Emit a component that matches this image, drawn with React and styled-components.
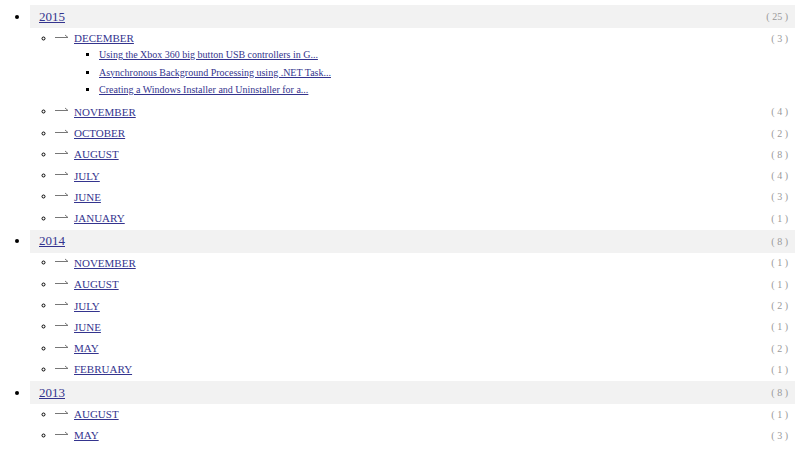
import React from 'react'
import styled, { createGlobalStyle } from 'styled-components'

const archive = [
  {
    year: 2015,
    count: 25,
    months: [
      {
        name: 'December',
        count: 3,
        posts: [
          'Using the Xbox 360 big button USB controllers in G...',
          'Asynchronous Background Processing using .NET Task...',
          'Creating a Windows Installer and Uninstaller for a...'
        ]
      },
      { name: 'November', count: 4 },
      { name: 'October', count: 2 },
      { name: 'August', count: 8 },
      { name: 'July', count: 4 },
      { name: 'June', count: 3 },
      { name: 'January', count: 1 }
    ]
  },
  {
    year: 2014,
    count: 8,
    months: [
      { name: 'November', count: 1 },
      { name: 'August', count: 1 },
      { name: 'July', count: 2 },
      { name: 'June', count: 1 },
      { name: 'May', count: 2 },
      { name: 'February', count: 1 }
    ]
  },
  {
    year: 2013,
    count: 8,
    months: [
      { name: 'August', count: 1 },
      { name: 'May', count: 3 }
    ]
  }
]

const GlobalStyle = createGlobalStyle`
  body {
    margin: 0;
    background: #fff;
    font-family: "Liberation Serif", "Times New Roman", serif;
  }
`

const Arrow = () => (
  <ArrowIcon width="14" height="8" viewBox="0 0 14 8">
    <path d="M0 4.5 H13 M10 2 L13 4.5" fill="none" stroke="#777" strokeWidth="1" />
  </ArrowIcon>
)

export default function App() {
  return (
    <>
      <GlobalStyle />
      <YearList>
        {archive.map((y) => (
          <YearItem key={y.year}>
            {/* year band */}
            <YearRow>
              <YearLink href="#">{y.year}</YearLink>
              <Count>( {y.count} )</Count>
            </YearRow>

            {/* months */}
            <MonthList>
              {y.months.map((m) => (
                <MonthItem key={m.name}>
                  <MonthRow>
                    <Arrow />
                    <MonthLink href="#">{m.name}</MonthLink>
                    <Count>( {m.count} )</Count>
                  </MonthRow>
                  {m.posts && (
                    <PostList>
                      {m.posts.map((p) => (
                        <PostItem key={p}>
                          <PostLink href="#">{p}</PostLink>
                        </PostItem>
                      ))}
                    </PostList>
                  )}
                </MonthItem>
              ))}
            </MonthList>
          </YearItem>
        ))}
      </YearList>
    </>
  )
}

const YearList = styled.ul`
  list-style: disc;
  margin: 5px 5px 0 0;
  padding-left: 30px;
`

const YearItem = styled.li`
  font-size: 13px;
  margin-bottom: 0.4px;
`

const YearRow = styled.div`
  display: flex;
  align-items: center;
  justify-content: space-between;
  height: 23px;
  padding: 0 7px 0 9px;
  background: #f2f2f2;
`

const YearLink = styled.a`
  color: #34348e;
  font-size: 13px;
  text-decoration: underline;
`

const Count = styled.span`
  margin-left: auto;
  color: #999;
  font-size: 10px;
`

const MonthList = styled.ul`
  list-style: circle;
  margin: 0;
  padding-left: 25px;
`

const MonthItem = styled.li`
  font-size: 11px;
  padding: 2px 0 3.3px;
`

const MonthRow = styled.div`
  display: flex;
  align-items: center;
  height: 16px;
  padding-right: 7px;
`

const ArrowIcon = styled.svg`
  margin-right: 5px;
  margin-top: -3px;
`

const MonthLink = styled.a`
  color: #34348e;
  text-transform: uppercase;
  font-size: 11px;
`

const PostList = styled.ul`
  list-style: square;
  margin: 0;
  padding-left: 44px;
`

const PostItem = styled.li`
  font-size: 10px;
  line-height: 17.5px;
`

const PostLink = styled.a`
  color: #34348e;
  font-size: 10px;
`
